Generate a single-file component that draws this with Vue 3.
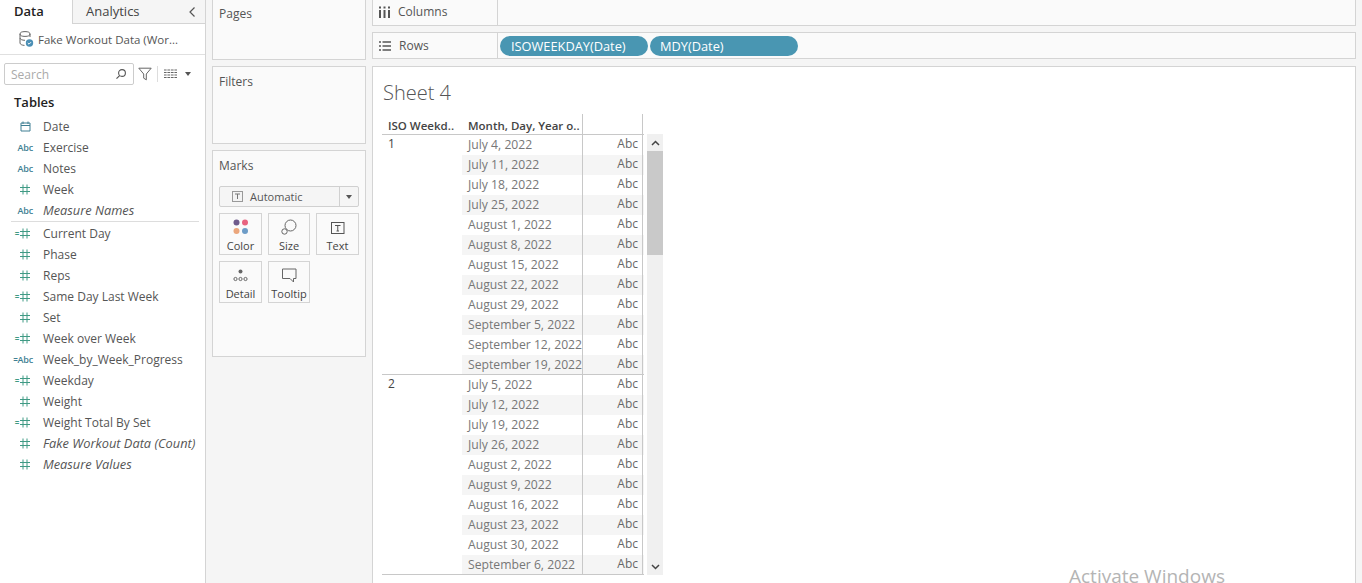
<script setup>
const dims = [
  { icon: 'cal', name: 'Date' },
  { icon: 'abc', name: 'Exercise' },
  { icon: 'abc', name: 'Notes' },
  { icon: 'num', name: 'Week' },
  { icon: 'abc', name: 'Measure Names', it: true }
]
const meas = [
  { icon: 'cnum', name: 'Current Day' },
  { icon: 'num', name: 'Phase' },
  { icon: 'num', name: 'Reps' },
  { icon: 'cnum', name: 'Same Day Last Week' },
  { icon: 'num', name: 'Set' },
  { icon: 'cnum', name: 'Week over Week' },
  { icon: 'cabc', name: 'Week_by_Week_Progress' },
  { icon: 'cnum', name: 'Weekday' },
  { icon: 'num', name: 'Weight' },
  { icon: 'cnum', name: 'Weight Total By Set' },
  { icon: 'num', name: 'Fake Workout Data (Count)', it: true },
  { icon: 'num', name: 'Measure Values', it: true }
]
const groups = [
  { key: '1', dates: ['July 4, 2022','July 11, 2022','July 18, 2022','July 25, 2022','August 1, 2022','August 8, 2022','August 15, 2022','August 22, 2022','August 29, 2022','September 5, 2022','September 12, 2022','September 19, 2022'] },
  { key: '2', dates: ['July 5, 2022','July 12, 2022','July 19, 2022','July 26, 2022','August 2, 2022','August 9, 2022','August 16, 2022','August 23, 2022','August 30, 2022','September 6, 2022'] }
]
</script>

<template>
  <div class="app">
    <aside class="side">
      <div class="tabs">
        <div class="tab active">Data</div>
        <div class="tab other">Analytics</div>
        <div class="collapse">
          <svg width="8" height="12" viewBox="0 0 8 12"><path d="M6.500 1.500 2 6l4.500 4.500" fill="none" stroke="#555" stroke-width="1.200"/></svg>
        </div>
      </div>
      <div class="source">
        <svg width="16" height="18" viewBox="0 0 16 18">
          <ellipse cx="7" cy="4" rx="5" ry="2.400" fill="none" stroke="#666"/>
          <path d="M2 4v9c0 1.300 2 2.300 4.500 2.400M12 4v3" fill="none" stroke="#666"/>
          <path d="M2 8c0 1.200 2 2.300 5 2.300" fill="none" stroke="#666"/>
          <circle cx="11.500" cy="13" r="3.700" fill="#4b8fb5"/>
          <path d="m9.800 13 1.200 1.200 2-2" fill="none" stroke="#fff"/>
        </svg>
        <span>Fake Workout Data (Wor...</span>
      </div>
      <div class="tools">
        <div class="search">
          <span>Search</span>
          <svg width="12" height="12" viewBox="0 0 12 12"><circle cx="7" cy="5" r="3.400" fill="none" stroke="#555" stroke-width="1.100"/><path d="M4.600 7.600 1.500 10.700" stroke="#555" stroke-width="1.200"/></svg>
        </div>
        <svg class="funnel" width="14" height="14" viewBox="0 0 14 14"><path d="M.8 1.200h12.400L8.300 7v5.800l-2.600-1.600V7z" fill="none" stroke="#666"/></svg>
        <i class="tool-sep"></i>
        <svg class="grid" width="13" height="10" viewBox="0 0 13 10"><path d="M0 1h13M0 3.500h13M0 6h13M0 8.500h13" stroke="#666" stroke-width="1.100"/><path d="M3 0v10M6.500 0v10M10 0v10" stroke="#fff" stroke-width=".8"/></svg>
        <i class="caret"></i>
      </div>
      <div class="tables">Tables</div>
      <ul class="fields">
        <li v-for="f in dims" :key="f.name" class="field">
          <span class="ficon" :class="f.icon">
            <svg v-if="f.icon === 'cal'" width="11" height="11" viewBox="0 0 11 11"><path d="M1 2h9v8H1zM1 4.500h9M3 .5v2.500M8 .5v2.500" fill="none" stroke="#3f7f93"/></svg>
            <template v-else-if="f.icon === 'abc'">Abc</template>
            <svg v-else width="12" height="11" viewBox="0 0 12 11"><path d="M4 .5v10M8 .5v10M1 3.500h10M1 7.500h10" fill="none" stroke="#3f9a84"/></svg>
          </span>
          <span :class="{ it: f.it }">{{ f.name }}</span>
        </li>
      </ul>
      <div class="field-sep"></div>
      <ul class="fields">
        <li v-for="f in meas" :key="f.name" class="field">
          <span class="ficon" :class="f.icon">
            <template v-if="f.icon === 'cabc'"><b class="eq">=</b>Abc</template>
            <template v-else>
              <b v-if="f.icon === 'cnum'" class="eq green">=</b>
              <svg width="12" height="11" viewBox="0 0 12 11"><path d="M4 .5v10M8 .5v10M1 3.500h10M1 7.500h10" fill="none" stroke="#3f9a84"/></svg>
            </template>
          </span>
          <span :class="{ it: f.it }">{{ f.name }}</span>
        </li>
      </ul>
    </aside>

    <section class="cards">
      <div class="card pages">Pages</div>
      <div class="card filters">Filters</div>
      <div class="card marks">
        <div>Marks</div>
        <div class="mark-type">
          <div class="mt-main">
            <svg width="11" height="11" viewBox="0 0 11 11"><rect x=".5" y=".5" width="10" height="10" fill="#f3f3f3" stroke="#999"/><path d="M3 3h5M5.500 3v5" stroke="#777"/></svg>
            <span>Automatic</span>
          </div>
          <div class="mt-caret"><i class="caret"></i></div>
        </div>
        <div class="mark-grid">
          <div class="mbtn">
            <svg width="16" height="16" viewBox="0 0 16 16"><circle cx="3.500" cy="3.500" r="3" fill="#6f5b8c"/><circle cx="12" cy="3.500" r="3" fill="#e8637f"/><circle cx="3.500" cy="12" r="3" fill="#eba67c"/><circle cx="12" cy="12" r="3" fill="#6d9cc7"/></svg>
            <span>Color</span>
          </div>
          <div class="mbtn">
            <svg width="16" height="16" viewBox="0 0 16 16"><circle cx="9.500" cy="6.500" r="5.500" fill="none" stroke="#666"/><circle cx="3.500" cy="12.500" r="2.700" fill="#fafafa" stroke="#666"/></svg>
            <span>Size</span>
          </div>
          <div class="mbtn">
            <svg width="14" height="13" viewBox="0 0 14 13"><rect x=".5" y=".5" width="12.500" height="11" fill="none" stroke="#555"/><path d="M4 3.500h5.500M6.750 3.500v5.500M5.500 9h2.500" stroke="#555"/></svg>
            <span>Text</span>
          </div>
          <div class="mbtn">
            <svg width="15" height="15" viewBox="0 0 15 15"><circle cx="7.500" cy="3.500" r="2" fill="#666"/><circle cx="2.500" cy="11" r="1.600" fill="none" stroke="#666"/><circle cx="7.500" cy="11" r="1.600" fill="none" stroke="#666"/><circle cx="12.500" cy="11" r="1.600" fill="none" stroke="#666"/></svg>
            <span>Detail</span>
          </div>
          <div class="mbtn">
            <svg width="15" height="15" viewBox="0 0 15 15"><path d="M.5 1h13.500v9.500h-2.500V14l-3.500-3.500H.5z" fill="none" stroke="#666"/></svg>
            <span>Tooltip</span>
          </div>
        </div>
      </div>
    </section>

    <main class="main">
      <div class="shelf">
        <div class="shelf-label top">
          <svg width="11" height="12" viewBox="0 0 11 12"><path d="M1 4v8M5.500 4v8M10 4v8" stroke="#555" stroke-width="2"/><path d="M0 1.500h2M4.500 1.500h2M9 1.500h2" stroke="#555" stroke-width="2"/></svg>
          <span>Columns</span>
        </div>
      </div>
      <div class="shelf rows">
        <div class="shelf-label">
          <svg width="12" height="10" viewBox="0 0 12 10"><path d="M0 1h2M0 5h2M0 9h2M3.500 1H12M3.500 5H12M3.500 9H12" stroke="#555" stroke-width="1.500"/></svg>
          <span>Rows</span>
        </div>
        <div class="pills">
          <div class="pill">ISOWEEKDAY(Date)</div>
          <div class="pill second">MDY(Date)</div>
        </div>
      </div>
      <div class="sheet">
        <h1>Sheet 4</h1>
        <div class="viz">
          <div class="table">
            <div class="thead">
              <div class="c1 h">ISO Weekd..</div>
              <div class="c2 h">Month, Day, Year o..</div>
              <div class="c3"></div>
            </div>
            <div v-for="g in groups" :key="g.key" class="group">
              <div class="c1 key">{{ g.key }}</div>
              <div class="gbody">
                <div v-for="d in g.dates" :key="d" class="row">
                  <div class="c2">{{ d }}</div>
                  <div class="c3">Abc</div>
                </div>
              </div>
            </div>
          </div>
          <div class="scroll">
            <div class="arrow"><svg width="9" height="6" viewBox="0 0 9 6"><path d="M1 5l3.500-3.500L8 5" fill="none" stroke="#444" stroke-width="1.500"/></svg></div>
            <div class="thumb"></div>
            <div class="arrow down"><svg width="9" height="6" viewBox="0 0 9 6"><path d="M1 1l3.500 3.500L8 1" fill="none" stroke="#444" stroke-width="1.500"/></svg></div>
          </div>
        </div>
      </div>
    </main>
    <div class="watermark">Activate Windows</div>
  </div>
</template>

<style>
html, body { margin: 0; overflow: hidden; background: #f5f5f5; }
</style>

<style scoped>
.app {
  position: relative;
  display: flex;
  width: 1362px;
  height: 583px;
  overflow: hidden;
  background: #f5f5f5;
  font-family: "Open Sans", "Liberation Sans", sans-serif;
  font-size: 12px;
  color: #555;
}
.side {
  width: 205px;
  height: 583px;
  flex: none;
  background: #fff;
  border-right: 1px solid #d4d4d4;
}
.tabs { display: flex; height: 24px; }
.tab { height: 24px; line-height: 23px; font-size: 13px; box-sizing: border-box; }
.active { width: 73px; padding-left: 14px; font-weight: 600; color: #222; background: #fff; border-right: 1px solid #d4d4d4; }
.other { width: 106px; padding-left: 13px; color: #444; background: #f5f5f5; border-bottom: 1px solid #d4d4d4; }
.collapse { flex: 1; display: flex; align-items: center; justify-content: center; background: #f5f5f5; border-bottom: 1px solid #d4d4d4; }
.source { display: flex; align-items: center; gap: 4px; height: 30px; padding-left: 18px; border-bottom: 1px solid #e0e0e0; white-space: nowrap; color: #555; font-size: 11.500px; }
.tools { display: flex; align-items: center; height: 22px; margin-top: 8px; padding-left: 4px; }
.search { width: 130px; height: 22px; box-sizing: border-box; border: 1px solid #ccc; border-radius: 2px; display: flex; align-items: center; justify-content: space-between; padding: 0 6px; color: #aaa; }
.funnel { margin-left: 4px; }
.tool-sep { width: 1px; height: 16px; background: #ddd; margin-left: 5px; }
.grid { margin-left: 6px; }
.tools .caret { margin-left: 8px; }
.caret { display: block; width: 0; height: 0; border: 3.500px solid transparent; border-top: 4px solid #555; border-bottom: 0; }
.tables { font-weight: 600; font-size: 13px; color: #222; padding-left: 14px; margin-top: 7px; height: 20px; line-height: 20px; }
.fields { list-style: none; margin: 0; padding: 0; }
.tables + .fields { margin-top: 4px; }
.field { display: flex; align-items: center; height: 21px; white-space: nowrap; color: #555; }
.ficon { width: 33px; margin-left: 8px; margin-right: 2px; flex: none; display: flex; align-items: center; justify-content: flex-end; box-sizing: border-box; padding-right: 8px; font-size: 9px; font-weight: 600; color: #3f7f93; letter-spacing: -.2px; }
.ficon.cal, .ficon.num, .ficon.cnum { padding-right: 10px; }
.eq { font-size: 8px; font-weight: 600; line-height: 1; }
.eq.green { color: #3f9a84; }
.it { font-style: italic; font-size: 12.800px; margin-bottom: 1px; }
.field-sep { height: 1px; background: #ddd; margin: 0 6px 1px 11px; }
.cards { width: 154px; margin-left: 6px; flex: none; display: flex; flex-direction: column; gap: 6px; }
.card { box-sizing: border-box; border: 1px solid #d4d4d4; background: #fafafa; padding: 6px; color: #555; }
.pages { height: 60px; border-top: 0; padding-top: 5px; }
.filters { height: 78px; }
.marks { height: 207px; }
.mark-type { display: flex; height: 21px; margin-top: 12px; width: 140px; box-sizing: border-box; border: 1px solid #d0d0d0; border-radius: 2px; background: #f5f5f5; }
.mt-main { flex: 1; display: flex; align-items: center; gap: 7px; padding-left: 12px; font-size: 11px; color: #555; }
.mt-caret { width: 18px; border-left: 1px solid #d0d0d0; display: flex; align-items: center; justify-content: center; }
.mark-grid { display: grid; grid-template-columns: 43px 42px 43px; gap: 6px; margin-top: 6px; }
.mbtn { box-sizing: border-box; height: 42px; border: 1px solid #d4d4d4; display: flex; flex-direction: column; align-items: center; justify-content: flex-end; padding-bottom: 1px; font-size: 11px; gap: 3px; background: #fafafa; color: #444; }
.main { width: 984px; margin-left: 6px; flex: none; display: flex; flex-direction: column; }
.shelf { display: flex; height: 26px; box-sizing: border-box; border: 1px solid #d4d4d4; border-top: 0; background: #fafafa; }
.rows { height: 27px; margin-top: 6px; border-top: 1px solid #d4d4d4; }
.shelf-label { width: 125px; flex: none; box-sizing: border-box; border-right: 1px solid #d4d4d4; display: flex; align-items: center; gap: 8px; padding-left: 6px; color: #555; }
.shelf-label.top { padding-bottom: 2px; }
.pills { display: flex; align-items: center; gap: 2px; padding: 1px 0 0 2px; }
.pill { width: 148px; height: 20px; line-height: 20px; border-radius: 10px; background: #4996b2; color: #fff; padding-left: 11px; box-sizing: border-box; font-size: 12.800px; }
.pill.second { padding-left: 10px; }
.sheet { flex: 1; margin-top: 7px; border: 1px solid #d4d4d4; border-bottom: 0; background: #fff; padding: 0 0 0 9px; }
h1 { margin: 13px 0 0; font-size: 20px; font-weight: 300; line-height: 26px; color: #555; padding-left: 1px; }
.viz { display: flex; margin-top: 8px; }
.table { width: 262px; flex: none; }
.thead { display: flex; height: 21px; border-bottom: 1px solid #c8c8c8; box-sizing: border-box; font-weight: 600; color: #444; font-size: 11.500px; white-space: nowrap; }
.c1 { width: 80px; flex: none; padding-left: 6px; box-sizing: border-box; }
.c2 { width: 120px; flex: none; padding-left: 6px; box-sizing: border-box; white-space: nowrap; }
.c3 { width: 61px; flex: none; text-align: right; padding-right: 4px; box-sizing: border-box; border-left: 1px solid #c8c8c8; border-right: 1px solid #c8c8c8; }
.thead .c2, .thead .c1 { line-height: 23px; }
.group { position: relative; display: flex; }
.group::after { content: ""; position: absolute; left: 0; right: 0; bottom: 0; height: 1px; background: #c8c8c8; }
.key { color: #444; line-height: 18px; }
.gbody { flex: 1; }
.row { display: flex; height: 20px; line-height: 20px; color: #777; font-size: 12.200px; }
.row:nth-child(even) { background: #f5f5f5; }
.row .c3 { color: #666; line-height: 18px; font-size: 12px; }
.scroll { width: 16px; height: 441px; margin-left: 3px; margin-top: 20px; background: #f0f0f0; display: flex; flex-direction: column; }
.arrow { height: 17px; display: flex; align-items: center; justify-content: center; }
.thumb { height: 104px; width: 16px; background: #c9c9c9; }
.arrow.down { margin-top: auto; }
.watermark { position: absolute; left: 1069px; top: 564px; font-size: 19px; line-height: 24px; color: #b4b4b4; white-space: nowrap; }
</style>
